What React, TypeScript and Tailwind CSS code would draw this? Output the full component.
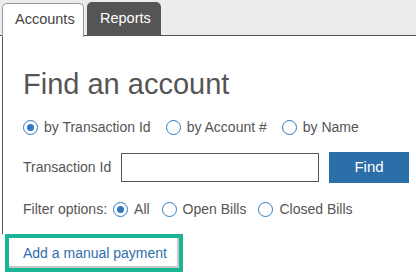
import React from "react";

function Radio({ checked = false }: { checked?: boolean }) {
  return (
    <span className="w-[15px] h-[15px] rounded-full border-[1.5px] border-[#2f78c4] flex items-center justify-center shrink-0 bg-white">
      {checked && <span className="w-[7px] h-[7px] rounded-full bg-[#2f78c4]" />}
    </span>
  );
}

function Option({ label, checked }: { label: string; checked?: boolean }) {
  return (
    <label className="flex items-center gap-[6px]">
      <Radio checked={checked} />
      <span>{label}</span>
    </label>
  );
}

export default function App() {
  return (
    <div className="w-[416px] h-[278px] overflow-hidden bg-white text-[#555] font-['Liberation_Sans',Arial,sans-serif] text-[14px]">
      <div className="h-[36px] bg-[#ececec] border-b-[1.5px] border-[#555] flex items-end pl-[2px] gap-[3px]">
        <div className="h-[34px] w-[82px] bg-white border border-b-0 border-[#9a9a9a] rounded-t-[5px] -mb-[1.5px] flex items-center pl-[12px] text-[14.5px] text-[#444]">
          Accounts
        </div>
        <div className="h-[33px] w-[74px] bg-[#555] rounded-t-[5px] flex items-center pl-[13px] text-[14.5px] text-white">
          Reports
        </div>
      </div>

      <div className="border-l-[1.5px] border-[#555] ml-[2px] pl-[20px] pt-[32px] pb-[4px] h-[198px]">
        <h1 className="text-[29px] leading-[32px] text-[#555]">Find an account</h1>

        <div className="flex items-center gap-[15px] mt-[17px] h-[20px]">
          <Option label="by Transaction Id" checked />
          <Option label="by Account #" />
          <Option label="by Name" />
        </div>

        <div className="flex items-center mt-[15px]">
          <span className="w-[98px]">Transaction Id</span>
          <input className="w-[198px] h-[29px] border-[1.5px] border-[#555] outline-none" />
          <button className="ml-[10px] w-[80px] h-[31px] bg-[#2a6fa8] text-white text-[15px]">Find</button>
        </div>

        <div className="flex items-center gap-[12px] mt-[16px] h-[20px]">
          <span className="-mr-[6px]">Filter options:</span>
          <Option label="All" checked />
          <Option label="Open Bills" />
          <Option label="Closed Bills" />
        </div>
      </div>

      <div className="ml-[5px] w-[178px] h-[38px] border-[4px] border-[#19b596] bg-white shadow-[inset_-2px_-2px_0_#c9c9c9] flex items-center pl-[14px] text-[#2f6fad] text-[14px]">
        Add a manual payment
      </div>
    </div>
  );
}
